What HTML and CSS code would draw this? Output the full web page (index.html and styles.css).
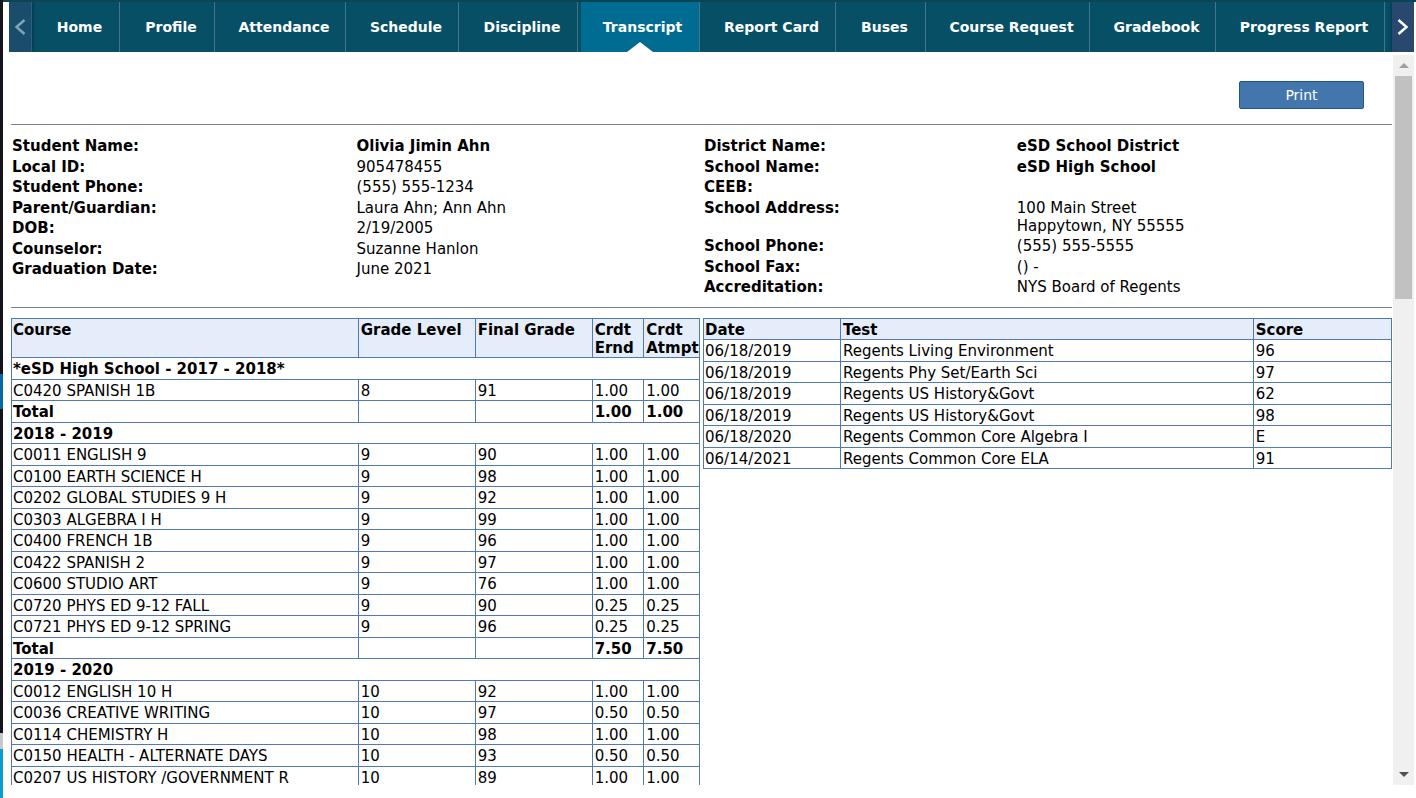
FILE: index.html
```
<!DOCTYPE html>
<html lang="en">
<head>
<meta charset="utf-8">
<title>Transcript</title>
<link rel="stylesheet" href="styles.css">
</head>
<body>
<div class="edge"><span class="edge-mark"></span><span class="edge-light"></span><span class="edge-blue"></span></div>
<div class="app">
  <div class="topline"></div>
  <nav class="nav" aria-label="Student record">
    <button class="arrow prev" type="button" aria-label="Previous tabs"><svg width="12" height="18" viewBox="0 0 12 18"><path d="M10.500 2 2.500 9 10.500 16" fill="none" stroke="currentColor" stroke-width="2.500"/></svg></button>
    <div class="tabs">
      <a href="#">Home</a><a href="#">Profile</a><a href="#">Attendance</a><a href="#">Schedule</a><a href="#">Discipline</a><a class="active" href="#" aria-current="page">Transcript</a><a href="#">Report Card</a><a href="#">Buses</a><a href="#">Course Request</a><a href="#">Gradebook</a><a href="#">Progress Report</a>
    </div>
    <button class="arrow next" type="button" aria-label="Next tabs"><svg width="12" height="18" viewBox="0 0 12 18"><path d="M1.500 2 9.500 9 1.500 16" fill="none" stroke="currentColor" stroke-width="2.500"/></svg></button>
  </nav>
  <div class="view">
    <main class="content">
      <div class="toolbar"><button class="print" type="button">Print</button></div>
      <section class="pair info">
        <table class="facts">
          <tr class="strong"><th scope="row">Student Name:</th><td>Olivia Jimin Ahn</td></tr>
          <tr><th scope="row">Local ID:</th><td>905478455</td></tr>
          <tr><th scope="row">Student Phone:</th><td>(555) 555-1234</td></tr>
          <tr><th scope="row">Parent/Guardian:</th><td>Laura Ahn; Ann Ahn</td></tr>
          <tr><th scope="row">DOB:</th><td>2/19/2005</td></tr>
          <tr><th scope="row">Counselor:</th><td>Suzanne Hanlon</td></tr>
          <tr><th scope="row">Graduation Date:</th><td>June 2021</td></tr>
        </table>
        <table class="facts school">
          <tr class="strong"><th scope="row">District Name:</th><td>eSD School District</td></tr>
          <tr class="strong"><th scope="row">School Name:</th><td>eSD High School</td></tr>
          <tr><th scope="row">CEEB:</th><td></td></tr>
          <tr><th scope="row">School Address:</th><td>100 Main Street<br>Happytown, NY 55555</td></tr>
          <tr><th scope="row">School Phone:</th><td>(555) 555-5555</td></tr>
          <tr><th scope="row">School Fax:</th><td>() -</td></tr>
          <tr><th scope="row">Accreditation:</th><td>NYS Board of Regents</td></tr>
        </table>
      </section>
      <section class="pair records">
        <table class="grid courses">
          <colgroup><col class="c-course"><col class="c-grade"><col class="c-grade"><col class="c-earned"><col class="c-attempt"></colgroup>
          <thead><tr><th>Course</th><th>Grade Level</th><th>Final Grade</th><th>Crdt Ernd</th><th>Crdt Atmpt</th></tr></thead>
          <tbody>
          <tr class="strong"><td colspan="5">*eSD High School - 2017 - 2018*</td></tr>
          <tr><td>C0420 SPANISH 1B</td><td>8</td><td>91</td><td>1.00</td><td>1.00</td></tr>
          <tr class="strong"><td>Total</td><td></td><td></td><td>1.00</td><td>1.00</td></tr>
          <tr class="strong"><td colspan="5">2018 - 2019</td></tr>
          <tr><td>C0011 ENGLISH 9</td><td>9</td><td>90</td><td>1.00</td><td>1.00</td></tr>
          <tr><td>C0100 EARTH SCIENCE H</td><td>9</td><td>98</td><td>1.00</td><td>1.00</td></tr>
          <tr><td>C0202 GLOBAL STUDIES 9 H</td><td>9</td><td>92</td><td>1.00</td><td>1.00</td></tr>
          <tr><td>C0303 ALGEBRA I H</td><td>9</td><td>99</td><td>1.00</td><td>1.00</td></tr>
          <tr><td>C0400 FRENCH 1B</td><td>9</td><td>96</td><td>1.00</td><td>1.00</td></tr>
          <tr><td>C0422 SPANISH 2</td><td>9</td><td>97</td><td>1.00</td><td>1.00</td></tr>
          <tr><td>C0600 STUDIO ART</td><td>9</td><td>76</td><td>1.00</td><td>1.00</td></tr>
          <tr><td>C0720 PHYS ED 9-12 FALL</td><td>9</td><td>90</td><td>0.25</td><td>0.25</td></tr>
          <tr><td>C0721 PHYS ED 9-12 SPRING</td><td>9</td><td>96</td><td>0.25</td><td>0.25</td></tr>
          <tr class="strong"><td>Total</td><td></td><td></td><td>7.50</td><td>7.50</td></tr>
          <tr class="strong"><td colspan="5">2019 - 2020</td></tr>
          <tr><td>C0012 ENGLISH 10 H</td><td>10</td><td>92</td><td>1.00</td><td>1.00</td></tr>
          <tr><td>C0036 CREATIVE WRITING</td><td>10</td><td>97</td><td>0.50</td><td>0.50</td></tr>
          <tr><td>C0114 CHEMISTRY H</td><td>10</td><td>98</td><td>1.00</td><td>1.00</td></tr>
          <tr><td>C0150 HEALTH - ALTERNATE DAYS</td><td>10</td><td>93</td><td>0.50</td><td>0.50</td></tr>
          <tr><td>C0207 US HISTORY /GOVERNMENT R</td><td>10</td><td>89</td><td>1.00</td><td>1.00</td></tr>
          </tbody>
        </table>
        <table class="grid tests">
          <colgroup><col class="t-date"><col class="t-name"><col class="t-score"></colgroup>
          <thead><tr><th>Date</th><th>Test</th><th>Score</th></tr></thead>
          <tbody>
          <tr><td>06/18/2019</td><td>Regents Living Environment</td><td>96</td></tr>
          <tr><td>06/18/2019</td><td>Regents Phy Set/Earth Sci</td><td>97</td></tr>
          <tr><td>06/18/2019</td><td>Regents US History&amp;Govt</td><td>62</td></tr>
          <tr><td>06/18/2019</td><td>Regents US History&amp;Govt</td><td>98</td></tr>
          <tr><td>06/18/2020</td><td>Regents Common Core Algebra I</td><td>E</td></tr>
          <tr><td>06/14/2021</td><td>Regents Common Core ELA</td><td>91</td></tr>
          </tbody>
        </table>
      </section>
    </main>
    <div class="scrollbar">
      <button class="step up" type="button" aria-label="Scroll up"><svg width="10" height="5" viewBox="0 0 10 5"><path d="M0 5 5 0 10 5Z" fill="currentColor"/></svg></button>
      <div class="track"><div class="thumb"></div></div>
      <button class="step down" type="button" aria-label="Scroll down"><svg width="10" height="5" viewBox="0 0 10 5"><path d="M0 0H10L5 5Z" fill="currentColor"/></svg></button>
    </div>
  </div>
</div>
</body>
</html>
```
FILE: styles.css
```
* { box-sizing: border-box; }
body {
  margin: 0;
  height: 100vh;
  display: flex;
  overflow: hidden;
  background: #fff;
  color: #000;
  font: 15px/18px Verdana, "DejaVu Sans", sans-serif;
}
button { border: 0; padding: 0; font: inherit; }

.edge { flex: none; width: 3px; background: #15141c; display: flex; flex-direction: column; }
.edge-mark { height: 35px; margin-top: 374px; background: #0567a8; }
.edge-light { height: 16px; margin-top: auto; background: #c8c8ca; }
.edge-blue { height: 49px; background: #0a9bd4; }

.app { flex: 1; min-width: 0; display: flex; flex-direction: column; padding-bottom: 13px; }
.topline { flex: none; height: 2px; background: #0a4556; }

.nav { flex: none; display: flex; height: 50px; margin: 0 2px 3px 6px; overflow: hidden; background: #064f65; }
.arrow { flex: none; display: flex; align-items: center; justify-content: center; }
.prev { width: 23px; background: #1a4c6b; color: #7fa3b7; border-right: 1px solid #2c607a; box-shadow: 1px 0 3px #033647; }
.next { width: 22px; background: #29486d; color: #fff; box-shadow: -1px 0 3px #033647; }
.tabs {
  flex: 1;
  display: grid;
  grid-template-columns: 88fr 95fr 131fr 113fr 119fr 122fr 136fr 90fr 164fr 126fr 169fr;
  padding-right: 7px;
}
.tabs a {
  display: flex;
  align-items: center;
  justify-content: center;
  padding-left: 8px;
  border-right: 1px solid #42758d;
  color: #fff;
  font-size: 14px;
  font-weight: bold;
  text-decoration: none;
  white-space: nowrap;
}
.tabs .active { position: relative; margin-left: 3px; padding-left: 5px; background: #006c91; }
.tabs .active::after {
  content: "";
  position: absolute;
  left: 50%;
  bottom: 0;
  margin-left: -13px;
  border: 13px solid transparent;
  border-top: 0;
  border-bottom: 10px solid #fff;
}

.view { flex: 1; min-height: 0; display: flex; }
.content { flex: 1; min-width: 0; overflow: hidden; margin-left: 8px; }
.toolbar { display: flex; justify-content: flex-end; padding: 26px 28px 15px 0; border-bottom: 1px solid #808080; }
.print { width: 125px; height: 28px; background: #4376ac; color: #fff; border: 1px solid #1d5b85; border-radius: 2px; font-size: 14px; }

.pair { display: grid; grid-template-columns: 1fr 1fr; gap: 3px; align-items: start; }
.info { padding: 11px 0 9px; border-bottom: 1px solid #808080; }
.facts { width: 100%; border-collapse: collapse; table-layout: fixed; }
.facts th, .facts td { padding: 1px; text-align: left; vertical-align: top; }
.facts th { width: 50%; font-weight: bold; }
.school th { width: 45.4%; }
.facts td { font-weight: normal; }
.facts tr { height: 20px; }
.facts tr:nth-child(odd) { height: 21px; }
.facts .strong td, .grid .strong td { font-weight: bold; }

.records { padding-top: 10px; }
.grid { width: 100%; border-collapse: collapse; table-layout: fixed; }
.grid th, .grid td { padding: 2px 0 0 1px; border: 1px solid #5079b5; text-align: left; vertical-align: top; }
.courses th + th, .courses td + td, .tests th + th, .tests td + td { padding-left: 2px; }
.grid th { background: #e5edfa; font-weight: bold; }
.grid tbody tr { height: 21px; }
.grid tbody tr:nth-child(odd) { height: 22px; }
.c-course { width: 50.4%; }
.c-grade { width: 17%; }
.c-earned { width: 7.5%; }
.c-attempt { width: 8.1%; }
.t-date { width: 19.9%; }
.t-name { width: 60%; }
.t-score { width: 20.1%; }

.scrollbar { flex: none; width: 21px; margin: 0 2px 0 1px; padding: 0 2px; background: #f0f0f0; display: flex; flex-direction: column; }
.step { flex: none; height: 21px; background: transparent; display: flex; align-items: center; justify-content: center; }
.up { color: #a0a0a0; }
.down { color: #505050; }
.track { flex: 1; }
.thumb { height: 223px; background: #c1c1c1; }
```
